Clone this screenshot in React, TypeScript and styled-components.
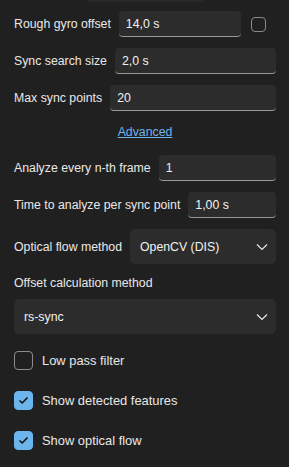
import React from "react";
import styled, { createGlobalStyle } from "styled-components";

const Global = createGlobalStyle`
  html, body {
    margin: 0;
    padding: 0;
    background: #202020;
  }
  body {
    font-family: "Liberation Sans", Arial, sans-serif;
    font-size: 12.3px;
    color: #e8e8e8;
  }
`;

const Page = styled.div`
  width: 289px;
  height: 467px;
  box-sizing: border-box;
  padding: 0 13px 0 14px;
  display: flex;
  flex-direction: column;
  overflow: hidden;
`;

const TopStub = styled.div`
  margin-left: 73px;
  width: 117px;
  height: 2px;
  background: #282828;
`;

const Row = styled.div<{ top: number }>`
  display: flex;
  align-items: center;
  gap: 8px;
  margin-top: ${({ top }) => top}px;
`;

const Label = styled.span`
  white-space: nowrap;
`;

const CheckLabel = styled.span`
  white-space: nowrap;
  font-size: 12.9px;
`;

const Field = styled.div<{ width?: number }>`
  flex: ${({ width }) => (width ? `0 0 ${width}px` : "1")};
  height: 26px;
  box-sizing: border-box;
  background: #2c2c2c;
  border-radius: 4px;
  border-bottom: 1px solid #9a9a9a;
  padding: 0 7px;
  display: flex;
  align-items: center;
  color: #f2f2f2;
`;

const Box = styled.div<{ checked?: boolean }>`
  width: 19px;
  height: 19px;
  box-sizing: border-box;
  border-radius: 4px;
  flex: 0 0 auto;
  border: 1px solid ${({ checked }) => (checked ? "#6cb4ec" : "#8c8c8c")};
  background: ${({ checked }) => (checked ? "#6cb4ec" : "transparent")};
  display: flex;
  align-items: center;
  justify-content: center;
`;

const SmallBox = styled(Box)`
  width: 15px;
  height: 15px;
  margin-left: 2px;
`;

const LinkRow = styled.div`
  margin-top: 14px;
  display: flex;
  justify-content: center;
  height: 15px;
`;

const Link = styled.a`
  color: #6cb4ec;
  text-decoration: underline;
  cursor: pointer;
`;

const Combo = styled.div`
  flex: 1;
  height: 35px;
  box-sizing: border-box;
  background: #2c2c2c;
  border-radius: 5px;
  padding: 0 8px 0 10px;
  display: flex;
  align-items: center;
  justify-content: space-between;
  color: #f2f2f2;
`;

const SectionLabel = styled.div`
  margin-top: 12px;
  height: 15px;
  line-height: 15px;
`;

const CheckRow = styled.div<{ top: number }>`
  display: flex;
  align-items: center;
  gap: 9px;
  margin-top: ${({ top }) => top}px;
`;

const Chevron = () => (
  <svg width="12" height="8" viewBox="0 0 12 8">
    <path d="M1 1.5 L6 6.5 L11 1.5" fill="none" stroke="#e8e8e8" strokeWidth="1.2" />
  </svg>
);

const Tick = () => (
  <svg width="11" height="9" viewBox="0 0 11 9">
    <path d="M1.5 4.5 L4.2 7 L9.5 1.5" fill="none" stroke="#111" strokeWidth="1.6" />
  </svg>
);

export default function App() {
  return (
    <Page>
      <Global />
      <TopStub />
      <Row top={9}>
        <Label>Rough gyro offset</Label>
        <Field width={122}>14,0 s</Field>
        <SmallBox />
      </Row>
      <Row top={11}>
        <Label>Sync search size</Label>
        <Field>2,0 s</Field>
      </Row>
      <Row top={11}>
        <Label>Max sync points</Label>
        <Field>20</Field>
      </Row>
      <LinkRow>
        <Link>Advanced</Link>
      </LinkRow>
      <Row top={15}>
        <Label>Analyze every n-th frame</Label>
        <Field>1</Field>
      </Row>
      <Row top={11}>
        <Label>Time to analyze per sync point</Label>
        <Field>1,00 s</Field>
      </Row>
      <Row top={11}>
        <Label>Optical flow method</Label>
        <Combo>
          OpenCV (DIS)
          <Chevron />
        </Combo>
      </Row>
      <SectionLabel>Offset calculation method</SectionLabel>
      <Row top={8}>
        <Combo>
          rs-sync
          <Chevron />
        </Combo>
      </Row>
      <CheckRow top={17}>
        <Box />
        <CheckLabel>Low pass filter</CheckLabel>
      </CheckRow>
      <CheckRow top={21}>
        <Box checked>
          <Tick />
        </Box>
        <CheckLabel>Show detected features</CheckLabel>
      </CheckRow>
      <CheckRow top={21}>
        <Box checked>
          <Tick />
        </Box>
        <CheckLabel>Show optical flow</CheckLabel>
      </CheckRow>
    </Page>
  );
}
